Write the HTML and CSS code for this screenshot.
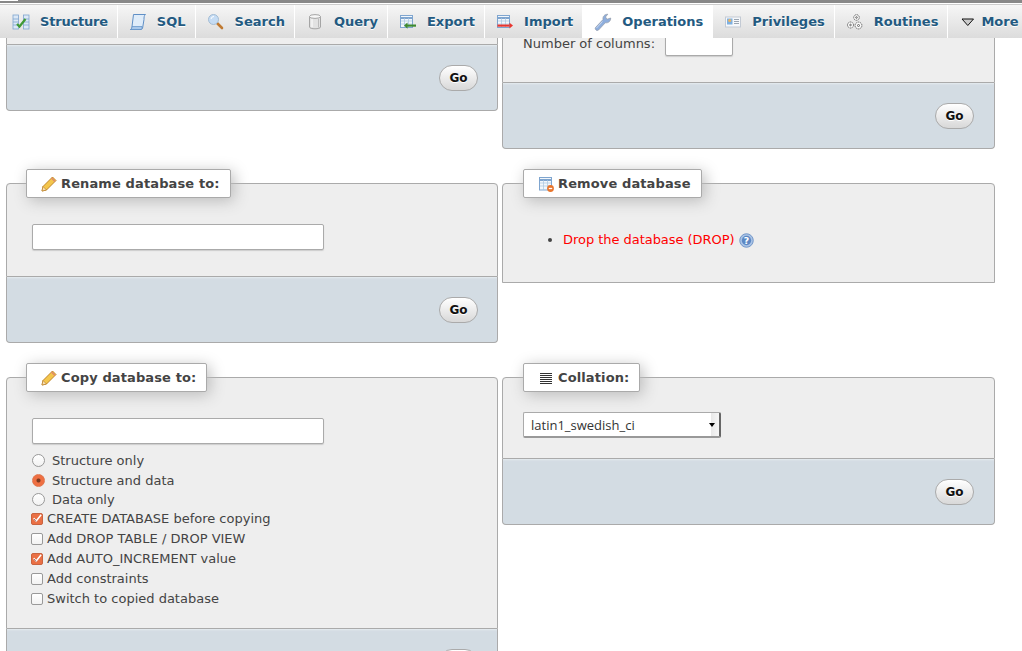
FILE: index.html
```html
<!DOCTYPE html>
<html lang="en">
<head>
<meta charset="utf-8">
<title>Operations</title>
<link rel="stylesheet" href="styles.css">
</head>
<body>
<nav class="topnav">
  <div class="topstrip"><span class="topstrip-mark"></span></div>
  <ul class="tabs">
    <li class="tab tab-first"><svg class="ico" viewBox="0 0 18 18"><rect x="1" y="2" width="5.500" height="14" fill="#dbe8f6" stroke="#7fa5cf" stroke-width=".8"/><rect x="11.500" y="2" width="5.500" height="14" fill="#dbe8f6" stroke="#7fa5cf" stroke-width=".8"/><path d="M1 6h5.500M1 9h5.500M1 12h5.500M11.500 6h5.500M11.500 9h5.500M11.500 12h5.500" stroke="#7fa5cf" stroke-width=".8"/><path d="M5 11l2.500 2.500L13.500 6" fill="none" stroke="#3f9a35" stroke-width="2.200"/></svg><span>Structure</span></li>
    <li class="tab"><svg class="ico" viewBox="0 0 18 18"><path d="M4.500 1.500h12c-1.500 1-1.500 3-1.500 5l-1.500 9a2 2 0 0 1-1.500 1H1.500c1-.5 1.300-1.500 1.500-3z" fill="#dfecf9" stroke="#5f8fc6"/><path d="M1.500 16.500c1.500-1 1.500-2 1.500-3h10c0 1 0 2-1 3z" fill="#a9c8ea" stroke="#5f8fc6" stroke-width=".7"/></svg><span>SQL</span></li>
    <li class="tab"><svg class="ico" viewBox="0 0 18 18"><path d="M10 10l5 5" stroke="#c07a32" stroke-width="2.600" stroke-linecap="round"/><circle cx="6.500" cy="6.500" r="5" fill="#c5dcf4" stroke="#a3bcd4"/><path d="M4 6a3 3 0 0 1 3-2.500" fill="none" stroke="#fff"/></svg><span>Search</span></li>
    <li class="tab"><svg class="ico" viewBox="0 0 18 18"><path d="M3.500 3.500v10.500c0 2.400 11 2.400 11 0V3.500z" fill="#e2e2e2" stroke="#a5a5a5"/><ellipse cx="9" cy="3.500" rx="5.500" ry="1.900" fill="#f7f7f7" stroke="#a5a5a5"/><path d="M6 6v8" stroke="#fff"/><path d="M12.500 6v8.500" stroke="#bbb"/></svg><span>Query</span></li>
    <li class="tab"><svg class="ico" viewBox="0 0 18 18"><rect x="1.500" y="2.500" width="12" height="12" fill="#f2f7fc" stroke="#7fa5cf"/><path d="M1.500 5h12" stroke="#7fa5cf" stroke-width="2"/><path d="M2 8h11M2 11h11M5.500 5v9M9.500 5v9" stroke="#a9c4e0" stroke-width=".7"/><path d="M8 11.500h9v2.200H8z" fill="#3e8a2f"/><path d="M8.500 9.500v6.200L5 12.600z" fill="#3e8a2f"/></svg><span>Export</span></li>
    <li class="tab"><svg class="ico" viewBox="0 0 18 18"><rect x="1.500" y="2.500" width="12" height="12" fill="#f2f7fc" stroke="#7fa5cf"/><path d="M1.500 5h12" stroke="#7fa5cf" stroke-width="2"/><path d="M2 8h11M2 11h11M5.500 5v9M9.500 5v9" stroke="#a9c4e0" stroke-width=".7"/><path d="M1.500 11.500h12v2.200h-12z" fill="#e8352f"/><path d="M13.500 9.800v5.600l3.500-2.800z" fill="#e8352f"/></svg><span>Import</span></li>
    <li class="tab tab-active"><svg class="ico" viewBox="0 0 18 18"><path d="M1.500 14.500L9 6.500c-.6-2.800 1.400-5.300 4.800-5.300l-2.300 2.800 1.600 2.200 3.600-1.200c.2 3-2.200 5.300-5.400 4.800l-6.800 7.300c-1.600 1.400-4.200-1-3-2.600z" fill="#8eaedd" stroke="#8a919c" stroke-width=".6"/><path d="M2.500 15l6-6.500" stroke="#c8d8f0" stroke-width="1"/></svg><span>Operations</span></li>
    <li class="tab"><svg class="ico" viewBox="0 0 18 18"><rect x="1.500" y="4" width="15" height="10" fill="#f6f8fb" stroke="#c3cad4"/><rect x="3" y="5.500" width="5.500" height="6" fill="#7fb0e0"/><circle cx="5.700" cy="7.500" r="1.500" fill="#f0b35a"/><path d="M10 6.500h5M10 8.500h5M10 10.500h5" stroke="#9aa5b2"/></svg><span>Privileges</span></li>
    <li class="tab"><svg class="ico" viewBox="0 0 18 18" fill="#fafafa" stroke="#666" stroke-width="1"><circle cx="10.500" cy="4.500" r="2.800" stroke-dasharray="1.300 .6"/><circle cx="4.500" cy="12" r="3" stroke-dasharray="1.300 .6"/><circle cx="12.500" cy="12.500" r="3.400" stroke-dasharray="1.400 .7"/><circle cx="10.500" cy="4.500" r=".8"/><circle cx="4.500" cy="12" r=".8"/><circle cx="12.500" cy="12.500" r="1"/></svg><span>Routines</span></li>
    <li class="tab tab-more"><svg class="ico" viewBox="0 0 18 18"><path d="M3 6h11.500l-5.700 6.500z" fill="#ccc" stroke="#111"/></svg><span>More</span></li>
  </ul>
</nav>

<main class="board">
  <section class="panel panel-left">
    <fieldset class="fs fs-stub"></fieldset>
    <div class="foot"><button class="go" type="button">Go</button></div>
  </section>

  <section class="panel panel-right">
    <fieldset class="fs">
      <label class="inline-field">Number of columns:<input class="text text-short" type="text"></label>
    </fieldset>
    <div class="foot"><button class="go" type="button">Go</button></div>
  </section>

  <section class="panel panel-left">
    <fieldset class="fs">
      <legend class="legend"><svg class="legend-ico" viewBox="0 0 16 16"><path d="M1 15l1-4.500L11.500 1l3.500 3.500L5.500 14z" fill="#f4c64c" stroke="#b87a1e" stroke-width=".9"/><path d="M1 15l1-4.500 3.500 3.500z" fill="#f7e0b5" stroke="#b87a1e" stroke-width=".6"/><path d="M10.500 2l3.500 3.500" stroke="#e08a6a" stroke-width="1.500"/></svg>Rename database to:</legend>
      <input class="text" type="text">
    </fieldset>
    <div class="foot"><button class="go" type="button">Go</button></div>
  </section>

  <section class="panel panel-right">
    <fieldset class="fs fs-drop">
      <legend class="legend"><svg class="legend-ico" viewBox="0 0 16 16"><rect x="1.500" y="1.500" width="12" height="12.500" fill="#f2f7fc" stroke="#7fa5cf"/><path d="M1.500 4h12" stroke="#7fa5cf" stroke-width="2"/><path d="M2 7h11M2 10h11M5.500 4v10M9.500 4v10" stroke="#a9c4e0" stroke-width=".7"/><circle cx="12.500" cy="12.500" r="3.400" fill="#e9752c"/><path d="M10.800 12.500h3.400" stroke="#fff" stroke-width="1.300"/></svg>Remove database</legend>
      <ul class="actions">
        <li><a class="danger" href="#">Drop the database (DROP)</a><svg class="help" viewBox="0 0 16 16"><circle cx="8" cy="8" r="7.200" fill="#a9c3e6" stroke="#6d92c6"/><circle cx="8" cy="8" r="5" fill="#5c88c4"/><text x="8" y="11.500" text-anchor="middle" class="help-mark">?</text></svg></li>
      </ul>
    </fieldset>
  </section>

  <section class="panel panel-left">
    <fieldset class="fs fs-copy">
      <legend class="legend"><svg class="legend-ico" viewBox="0 0 16 16"><path d="M1 15l1-4.500L11.500 1l3.500 3.500L5.500 14z" fill="#f4c64c" stroke="#b87a1e" stroke-width=".9"/><path d="M1 15l1-4.500 3.500 3.500z" fill="#f7e0b5" stroke="#b87a1e" stroke-width=".6"/><path d="M10.500 2l3.500 3.500" stroke="#e08a6a" stroke-width="1.500"/></svg>Copy database to:</legend>
      <input class="text" type="text">
      <div class="options">
        <label class="opt opt-radio"><input type="radio" name="what" class="radio">Structure only</label>
        <label class="opt opt-radio"><input type="radio" name="what" class="radio" checked>Structure and data</label>
        <label class="opt opt-radio"><input type="radio" name="what" class="radio">Data only</label>
        <label class="opt opt-check"><input type="checkbox" class="check" checked>CREATE DATABASE before copying</label>
        <label class="opt opt-check"><input type="checkbox" class="check">Add DROP TABLE / DROP VIEW</label>
        <label class="opt opt-check"><input type="checkbox" class="check" checked>Add AUTO_INCREMENT value</label>
        <label class="opt opt-check"><input type="checkbox" class="check">Add constraints</label>
        <label class="opt opt-check"><input type="checkbox" class="check">Switch to copied database</label>
      </div>
    </fieldset>
    <div class="foot"><button class="go" type="button">Go</button></div>
  </section>

  <section class="panel panel-right">
    <fieldset class="fs fs-collation">
      <legend class="legend"><svg class="legend-ico" viewBox="0 0 16 16"><path d="M2 3.500h12M2 5.500h12M2 7.500h12M2 9.500h12M2 11.500h12M2 13.500h12" stroke="#333" stroke-width="1"/></svg>Collation:</legend>
      <span class="select-wrap"><select class="select"><option>latin1_swedish_ci</option></select></span>
    </fieldset>
    <div class="foot"><button class="go" type="button">Go</button></div>
  </section>
</main>
</body>
</html>
```
FILE: styles.css
```css
* { box-sizing: border-box; }
html, body { margin: 0; height: 651px; overflow: hidden; background: #fff; }
body { font-family: "DejaVu Sans", sans-serif; font-size: 13px; color: #444; position: relative; }

.topnav { position: absolute; top: 0; left: 0; width: 1022px; z-index: 5; background: #fff; overflow: hidden; }
.topstrip { height: 3px; background: #888; }
.topstrip-mark { display: block; width: 18px; height: 1px; background: #fff; }
.tabs { display: flex; margin: 1px 0 0; padding: 0; list-style: none; border-top: 1px solid #ccc; height: 34px; }
.tab { flex: none; display: flex; align-items: center; gap: 10px; padding: 0 9px 0 11px; margin-right: 1px; background: linear-gradient(#f6f6f6, #dcdcdc); font-weight: bold; color: #235a81; text-shadow: 0 1px 0 #fff; }
.tab-first { padding-left: 12px; letter-spacing: -.2px; }
.tab-active { background: #fff; }
.tab-more { padding-left: 11px; gap: 4px; margin-right: 0; }
.ico { width: 18px; height: 18px; flex: none; }

.board { display: grid; grid-template-columns: 492px 493px; column-gap: 4px; row-gap: 20px; align-items: start; padding: 3px 0 0 6px; }

.fs { display: block; min-width: 0; margin: 0; padding: 26px 25px; background: #eee; border: 1px solid #aaa; border-radius: 4px 4px 0 0; }
.fs-stub { height: 42px; padding: 0; }
.fs-copy { padding-bottom: 19px; }
.fs-drop { padding-top: 32px; padding-bottom: 32px; }
.fs-collation { padding-top: 20px; padding-bottom: 20px; }
.panel-right .fs { padding-left: 20px; }

.legend { display: flex; align-items: center; height: 29px; margin-left: -6px; padding: 0 10px 0 14px; background: #fff; border: 1px solid #aaa; border-radius: 2px; font-weight: bold; color: #444; letter-spacing: .12px; box-shadow: 3px 3px 15px #bbb; }
.panel-right .legend { margin-left: 0; }
.legend-ico { width: 16px; height: 16px; margin-right: 4px; flex: none; }

.foot { display: flex; justify-content: flex-end; padding: 20px 19px 19px 0; background: #d3dce3; border: 1px solid #aaa; border-top: 0; border-radius: 0 0 4px 4px; box-shadow: inset 0 2px 2px -1px #e6ecf0; }
.panel-right .foot { padding-right: 20px; }
.go { width: 39px; height: 26px; padding: 0; font: bold 12px "DejaVu Sans", sans-serif; color: #111; text-shadow: 0 1px 0 #fff; background: linear-gradient(#fff, #d8d8d8); border: 1px solid #aaa; border-radius: 13px; }

.text { display: block; width: 292px; height: 26px; padding: 0 4px; background: #fff; border: 1px solid #aaa; border-radius: 2px; box-shadow: 0 1px 1px #ccc; }
.text-short { width: 68px; margin-left: 10px; }
.inline-field { display: flex; align-items: center; }

.options { margin-top: 7px; }
.opt { display: flex; align-items: center; }
.opt-radio { height: 19.4px; gap: 7px; }
.opt-check { height: 20px; gap: 4px; margin-left: -1px; }
.opt-radio + .opt-check { margin-top: -.6px; }
.radio { appearance: none; width: 13px; height: 13px; margin: 0; background: linear-gradient(#fff, #f2f2f2); border: 1px solid #999; border-radius: 50%; }
.radio:checked { background: radial-gradient(circle, #7a3a20 0 1.5px, #ee6f42 2.5px); border-color: #e0764e; }
.check { appearance: none; width: 12px; height: 12px; margin: 0; background: linear-gradient(#fff, #f2f2f2); border: 1px solid #999; border-radius: 2px; }
.check:checked { background: #ea7045 url("data:image/svg+xml,%3Csvg xmlns='http://www.w3.org/2000/svg' viewBox='0 0 12 12'%3E%3Cpath d='M2 5l3 3.500L11 1' fill='none' stroke='%23fff' stroke-width='1.800'/%3E%3Cpath d='M2.500 6l2.500 3' stroke='%23633' stroke-width='.8'/%3E%3C/svg%3E") center/cover; border-color: #c9633f; }

.actions { margin: 0; padding: 0 0 0 40px; }
.actions li { line-height: 20px; }
.danger { color: #f00; text-decoration: none; letter-spacing: -.04px; }
.help { width: 15px; height: 15px; margin-left: 4px; vertical-align: -4px; }
.help-mark { font: bold 10px "DejaVu Sans", sans-serif; fill: #fff; }

.select-wrap { display: block; position: relative; width: 198px; height: 26px; }
.select-wrap::after { content: ""; position: absolute; right: 6px; top: 11px; border: 3px solid transparent; border-top: 4px solid #000; }
.select { display: block; width: 198px; height: 26px; padding: 0 7px; appearance: none; font: 13px "Open Sans", sans-serif; color: #333; background: linear-gradient(to right, #fff 187px, #e8e8e8 187px, #f4f4f4 194px); border: 1px solid #aaa; border-right: 2px solid #666; border-bottom: 2px solid #999; border-radius: 2px; }
```
